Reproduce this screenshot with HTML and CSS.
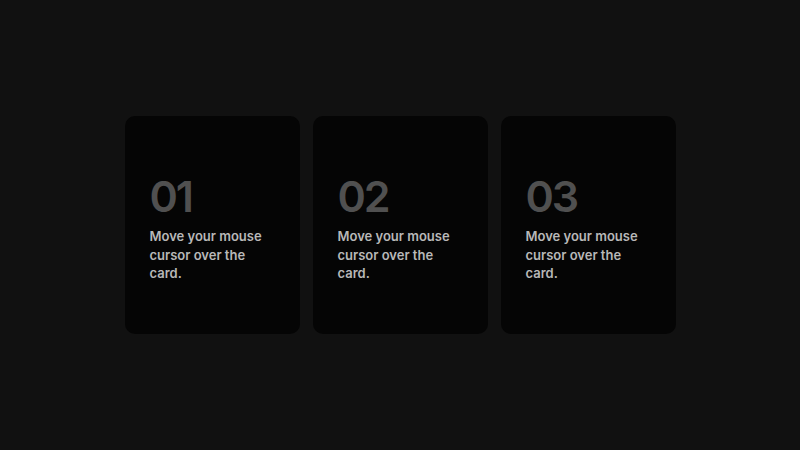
FILE: index.html
```html
<!DOCTYPE html>
<html lang="en">

<head>
    <meta charset="UTF-8" />
    <meta name="viewport" content="width=device-width, initial-scale=1.0" />
    <title>Cards</title>
    <link rel="stylesheet" href="styles.css">
</head>

<body>
    <div class="cards">
        <div class="card">
            <h2>01</h2>
            <p>Move your mouse cursor over the card.</p>
        </div>
        <div class="card">
            <h2>02</h2>
            <p>Move your mouse cursor over the card.</p>
        </div>
        <div class="card">
            <h2>03</h2>
            <p>Move your mouse cursor over the card.</p>
        </div>
    </div>
</body>

</html>
```

FILE: styles.css
```css
body {
    margin: 0;
    padding: 0;
    font-family: Inter, 'Open Sans', sans-serif;
    background-color: #111111;
    display: flex;
    align-items: center;
    justify-content: center;
    min-height: 100vh;
}

.cards {
    display: flex;
    gap: 13px;
}

.card {
    width: 175px;
    height: 218px;
    box-sizing: border-box;
    padding: 0 25px;
    background-color: #050505;
    border-radius: 10px;
    display: flex;
    flex-direction: column;
    justify-content: center;
}

.card h2 {
    margin: 4px 0 6px;
    font-size: 43px;
    font-weight: 600;
    line-height: 50px;
    color: #505050;
    letter-spacing: -2px;
}

.card p {
    margin: 0;
    font-size: 13px;
    font-weight: 600;
    line-height: 18.5px;
    color: #b8b8b8;
}
```
